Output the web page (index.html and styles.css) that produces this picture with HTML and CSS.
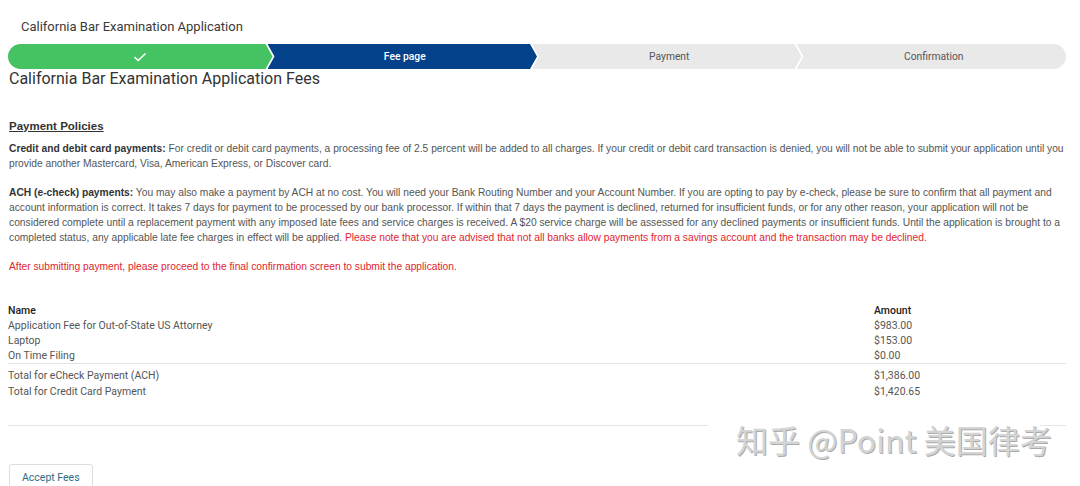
FILE: index.html
```html
<!DOCTYPE html>
<html lang="en">
<head>
    <meta charset="UTF-8">
    <meta name="viewport" content="width=device-width, initial-scale=1.0">
    <title>California Bar Examination Application</title>
    <link rel="stylesheet" href="styles.css">
</head>
<body>
    <div class="page">
        <div class="app-title">California Bar Examination Application</div>

        <div class="steps">
            <div class="step done">
                <svg width="14" height="10" viewBox="0 0 14 10"><path d="M1.5 5.2 L5.2 8.5 L12.5 1.5" fill="none" stroke="#fff" stroke-width="1.6"/></svg>
            </div>
            <div class="step current">Fee page</div>
            <div class="step">Payment</div>
            <div class="step last">Confirmation</div>
        </div>

        <h2>California Bar Examination Application Fees</h2>

        <div class="policies">
            <div class="policy-title">Payment Policies</div>
            <p><b>Credit and debit card payments:</b> For credit or debit card payments, a processing fee of 2.5 percent will be added to all charges. If your credit or debit card transaction is denied, you will not be able to submit your application until you provide another Mastercard, Visa, American Express, or Discover card.</p>
            <p><b>ACH (e-check) payments:</b> You may also make a payment by ACH at no cost. You will need your Bank Routing Number and your Account Number. If you are opting to pay by e-check, please be sure to confirm that all payment and account information is correct. It takes 7 days for payment to be processed by our bank processor. If within that 7 days the payment is declined, returned for insufficient funds, or for any other reason, your application will not be considered complete until a replacement payment with any imposed late fees and service charges is received. A $20 service charge will be assessed for any declined payments or insufficient funds. Until the application is brought to a completed status, any applicable late fee charges in effect will be applied. <span class="warn">Please note that you are advised that not all banks allow payments from a savings account and the transaction may be declined.</span></p>
            <p class="warn">After submitting payment, please proceed to the final confirmation screen to submit the application.</p>
        </div>

        <table class="fees">
            <thead>
                <tr><th>Name</th><th class="amount">Amount</th></tr>
            </thead>
            <tbody>
                <tr><td>Application Fee for Out-of-State US Attorney</td><td class="amount">$983.00</td></tr>
                <tr><td>Laptop</td><td class="amount">$153.00</td></tr>
                <tr><td>On Time Filing</td><td class="amount">$0.00</td></tr>
                <tr class="total first"><td>Total for eCheck Payment (ACH)</td><td class="amount">$1,386.00</td></tr>
                <tr class="total"><td>Total for Credit Card Payment</td><td class="amount">$1,420.65</td></tr>
            </tbody>
        </table>

        <div class="divider"></div>

        <button class="accept">Accept Fees</button>
    </div>

    <div class="watermark">知乎 @Point 美国律考</div>
</body>
</html>
```

FILE: styles.css
```css
body {
    margin: 0;
    background: #fff;
    font-family: Roboto, "Liberation Sans", Arial, sans-serif;
    color: #333;
}
.page {
    padding: 0 14px 0 8px;
}
.app-title {
    font-size: 13px;
    line-height: 20px;
    padding: 17px 0 0 13px;
    color: #3a3a3a;
}

/* progress steps */
.steps {
    display: flex;
    height: 25px;
    margin-top: 7px;
    border-radius: 13px;
    overflow: hidden;
}
.step {
    flex: 1;
    display: flex;
    align-items: center;
    justify-content: center;
    font-size: 10.3px;
    color: #555;
    background: #e9e9e9;
    margin-left: -5px;
    padding-left: 5px;
    clip-path: polygon(0 0, calc(100% - 7px) 0, 100% 50%, calc(100% - 7px) 100%, 0 100%, 7px 50%);
}
.step.done {
    background: #45c262;
    margin-left: 0;
    padding-left: 0;
    clip-path: polygon(0 0, calc(100% - 7px) 0, 100% 50%, calc(100% - 7px) 100%, 0 100%);
}
.step.current {
    background: #03428a;
    color: #fff;
    font-weight: 500;
}
.step.last {
    clip-path: polygon(0 0, 100% 0, 100% 100%, 0 100%, 7px 50%);
}

h2 {
    font-size: 16px;
    font-weight: normal;
    line-height: 20px;
    margin: 0 0 0 1px;
    color: #333;
}

/* policies */
.policies {
    font-family: "Liberation Sans", Arial, sans-serif;
    font-size: 10.25px;
    line-height: 15px;
    color: #555;
    margin-top: 30px;
    padding-left: 1px;
}
.policy-title {
    font-size: 11.5px;
    font-weight: bold;
    text-decoration: underline;
    color: #333;
    margin-bottom: 7px;
}
.policies p {
    margin: 0 0 14px;
}
.policies b {
    color: #333;
}
.warn {
    color: #e0252d;
}

/* fee table */
.fees {
    width: 100%;
    border-collapse: collapse;
    font-size: 10.5px;
    margin-top: 29px;
}
.fees th,
.fees td {
    text-align: left;
    padding: 0;
    line-height: 15px;
    font-weight: normal;
    color: #555;
}
.fees th {
    color: #222;
    font-weight: 500;
}
.fees .amount {
    width: 192px;
}
.fees .total.first td {
    border-top: 1px solid #e3e3e3;
    padding-top: 4px;
}
.fees .total td {
    line-height: 16px;
}

.divider {
    border-top: 1px solid #e6e6e6;
    margin-top: 25px;
}

.accept {
    margin: 38px 0 0 1px;
    font-family: Roboto, sans-serif;
    font-size: 10.5px;
    color: #2d6b86;
    background: #fff;
    border: 1px solid #ddd;
    border-radius: 3px;
    padding: 6px 12px 10px;
}

.watermark {
    position: absolute;
    left: 708px;
    top: 416px;
    width: 304px;
    padding-left: 28px;
    background: #fff;
    font-family: "Noto Sans CJK SC", sans-serif;
    font-size: 32px;
    line-height: 46px;
    white-space: nowrap;
    color: #d4d4d4;
    text-shadow: 1px 1px 0 #ababab;
}
```
